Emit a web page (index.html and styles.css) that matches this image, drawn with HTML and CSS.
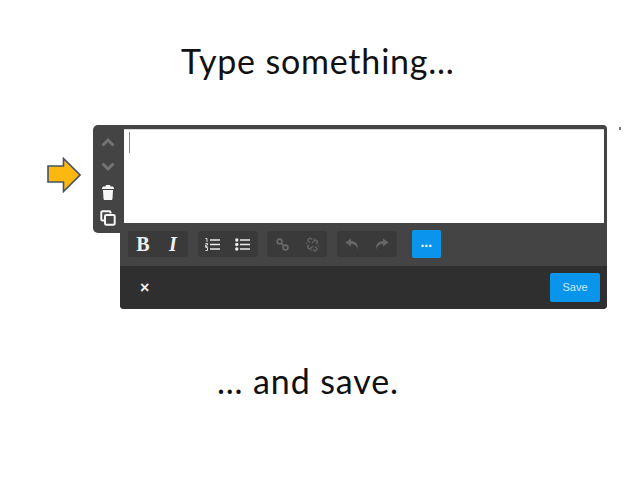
FILE: index.html
```html
<!DOCTYPE html>
<html lang="en">
<head>
  <meta charset="UTF-8" />
  <title>Type something</title>
  <link rel="stylesheet" href="styles.css">
</head>
<body>
  <div class="slide">
    <h1 class="title">Type something…</h1>

    <div class="demo">
      <!-- Yellow pointer -->
      <svg class="pointer" width="34" height="36" viewBox="0 0 34 36">
        <path d="M1 9H16.500V1.500L33 18L16.500 34.500V25H1Z" fill="#fdb80f" stroke="#44546a" stroke-width="1.600"/>
      </svg>

      <!-- Block controls -->
      <div class="side">
        <svg class="side-icon icon-up" width="16" height="10" viewBox="0 0 16 10"><path d="M2.500 8.500L8 3L13.500 8.500" fill="none" stroke="#737373" stroke-width="3"/></svg>
        <svg class="side-icon icon-down" width="16" height="10" viewBox="0 0 16 10"><path d="M2.500 1.500L8 7L13.500 1.500" fill="none" stroke="#737373" stroke-width="3"/></svg>
        <svg class="side-icon icon-trash" width="14" height="15" viewBox="0 0 14 15"><path d="M4.500 1.500C4.500 0.500 5 0 6 0H8C9 0 9.500 0.500 9.500 1.500H11.500C12.500 1.500 13 2.500 13 4H1C1 2.500 1.500 1.500 2.500 1.500ZM2 5H12L11.500 13.500C11.400 14.500 11 15 10 15H4C3 15 2.600 14.500 2.500 13.500Z" fill="#f6f6f6"/></svg>
        <svg class="side-icon" width="16" height="16" viewBox="0 0 16 16"><path d="M10.500 3.500V2.500A1.200 1.200 0 0 0 9.300 1.300H2.500A1.200 1.200 0 0 0 1.300 2.500V9.300A1.200 1.200 0 0 0 2.500 10.500H4" fill="none" stroke="#f6f6f6" stroke-width="2"/><rect x="5" y="5" width="9.700" height="9.700" rx="1.300" fill="none" stroke="#f6f6f6" stroke-width="2"/></svg>
      </div>

      <div class="editor">
        <div class="text-area"><span class="caret"></span></div>

        <div class="toolbar">
          <div class="tool-group">
            <span class="tool tool-bold">B</span>
            <span class="tool tool-italic">I</span>
          </div>
          <div class="tool-group">
            <span class="tool">
              <svg width="15" height="13" viewBox="0 0 15 13"><path d="M5 2H15M5 6.500H15M5 11H15" stroke="#ececec" stroke-width="1.700"/><path d="M0.500 0.500H2V4M0.500 5.500H2.500V7H0.500V8.500H2.500M0.500 9.500H2.500V12.500H0.500" fill="none" stroke="#ececec" stroke-width="0.900"/></svg>
            </span>
            <span class="tool">
              <svg width="15" height="13" viewBox="0 0 15 13"><path d="M5 2H15M5 6.500H15M5 11H15" stroke="#ececec" stroke-width="1.700"/><circle cx="1.800" cy="2" r="1.700" fill="#ececec"/><circle cx="1.800" cy="6.500" r="1.700" fill="#ececec"/><circle cx="1.800" cy="11" r="1.700" fill="#ececec"/></svg>
            </span>
          </div>
          <div class="tool-group">
            <span class="tool">
              <svg width="13" height="13" viewBox="0 0 13 13"><circle cx="3.500" cy="3.500" r="2.400" fill="none" stroke="#6a6a6a" stroke-width="1.700"/><circle cx="9.500" cy="9.500" r="2.400" fill="none" stroke="#6a6a6a" stroke-width="1.700"/><path d="M5 5L8 8" stroke="#6a6a6a" stroke-width="1.700"/></svg>
            </span>
            <span class="tool">
              <svg width="15" height="15" viewBox="0 0 15 15"><path d="M5 5.500L3 3.500A2 2 0 0 1 6 1.500L7 2.500M10 9.500L12 11.500A2 2 0 0 1 9 13.500L8 12.500M7 6L9.500 3.500A1.800 1.800 0 0 1 12 6L11 7M8 9L5.500 11.500A1.800 1.800 0 0 1 3 9L4 8" fill="none" stroke="#626262" stroke-width="1.500"/><path d="M9 1V2.500M1 6H2.500M12.500 9H14M6 12.500V14" stroke="#626262" stroke-width="1.100"/></svg>
            </span>
          </div>
          <div class="tool-group">
            <span class="tool">
              <svg width="14" height="12" viewBox="0 0 14 12"><path d="M6 0.500L0.500 4.500L6 8.500V6C9.500 6 11.500 7.500 12.500 11.500C13.500 6.500 11 3 6 3Z" fill="#676767"/></svg>
            </span>
            <span class="tool">
              <svg width="14" height="12" viewBox="0 0 14 12"><path d="M8 0.500L13.500 4.500L8 8.500V6C4.500 6 2.500 7.500 1.500 11.500C0.500 6.500 3 3 8 3Z" fill="#676767"/></svg>
            </span>
          </div>
          <span class="more">...</span>
        </div>

        <div class="footer">
          <span class="close">×</span>
          <span class="save">Save</span>
        </div>
      </div>

      <span class="speck"></span>
    </div>

    <p class="caption">… and save.</p>
  </div>
</body>
</html>
```

FILE: styles.css
```css
body {
  margin: 0;
  background-color: white;
  font-family: Lato, "Open Sans", sans-serif;
}

.slide {
  width: 638px;
  height: 479px;
  overflow: hidden;
}

.title {
  margin: 0;
  padding: 41px 0 0 181px;
  height: 125px;
  box-sizing: border-box;
  font-size: 34px;
  line-height: 40px;
  font-weight: 400;
  letter-spacing: 0.8px;
  color: #111;
}

.demo {
  display: flex;
  align-items: flex-start;
  padding-left: 47px;
}

.pointer {
  margin: 32px 12px 0 0;
}

.side {
  width: 27px;
  height: 108px;
  padding-top: 12px;
  box-sizing: border-box;
  background-color: #444;
  border-radius: 5px 0 0 5px;
  display: flex;
  flex-direction: column;
  align-items: center;
}

.side-icon {
  display: block;
  margin-left: 2px;
}

.icon-up {
  margin-bottom: 15px;
}

.icon-down {
  margin-bottom: 13px;
}

.icon-trash {
  margin-bottom: 10px;
}

.editor {
  width: 487px;
  height: 184px;
  border-radius: 0 4px 4px 4px;
  overflow: hidden;
  background-color: #444;
  display: flex;
  flex-direction: column;
}

.text-area {
  height: 94px;
  margin: 4px 3px 0 4px;
  background-color: white;
  border-top: 1px solid #d8d8d8;
  box-sizing: border-box;
}

.caret {
  display: block;
  width: 1px;
  height: 21px;
  margin: 2px 0 0 5px;
  background-color: #8a8a8a;
}

.toolbar {
  height: 43px;
  display: flex;
  align-items: center;
  gap: 9.700px;
  padding: 7px 0 8px 8px;
  box-sizing: border-box;
  background-color: #444;
}

.tool-group {
  display: flex;
  width: 60px;
  height: 26px;
  background-color: #3a3a3a;
  border-radius: 3px;
}

.tool {
  flex: 1;
  display: flex;
  align-items: center;
  justify-content: center;
  color: #f0f0f0;
}

.tool-bold,
.tool-italic {
  font-family: "Liberation Serif", serif;
  font-size: 20px;
  font-weight: bold;
}

.tool-italic {
  font-style: italic;
}

.more {
  width: 29px;
  height: 28px;
  margin-left: 5px;
  background-color: #0a95ec;
  border-radius: 2px;
  color: white;
  font-family: "Liberation Sans", sans-serif;
  font-size: 14px;
  font-weight: bold;
  line-height: 25px;
  text-align: center;
}

.footer {
  flex: 1;
  display: flex;
  align-items: center;
  justify-content: space-between;
  padding: 0 7px 0 20px;
  background-color: #2f2f2f;
}

.close {
  color: #eee;
  font-family: "Liberation Sans", sans-serif;
  font-size: 16px;
  font-weight: bold;
}

.save {
  width: 50px;
  height: 29px;
  background-color: #0a95ec;
  border-radius: 2px;
  color: #cfe9fb;
  font-family: "Liberation Sans", sans-serif;
  font-size: 11px;
  line-height: 29px;
  text-align: center;
}

.speck {
  width: 2px;
  height: 3px;
  margin: 2px 0 0 12px;
  background-color: #777;
}

.caption {
  margin: 0;
  padding: 52px 0 0 217px;
  font-size: 34px;
  line-height: 40px;
  letter-spacing: 0.9px;
  color: #111;
}
```
